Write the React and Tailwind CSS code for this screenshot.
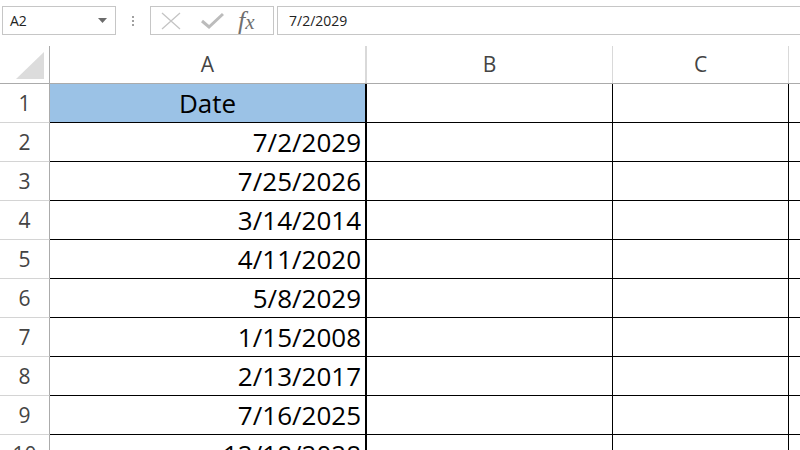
import React from "react";

const dates = [
  "7/2/2029",
  "7/25/2026",
  "3/14/2014",
  "4/11/2020",
  "5/8/2029",
  "1/15/2008",
  "2/13/2017",
  "7/16/2025",
  "12/18/2028",
];

const font = { fontFamily: '"Open Sans", "Liberation Sans", sans-serif' };

function FormulaBar() {
  return (
    <div className="flex h-[46px] items-start pt-[6px] bg-white">
      <div className="ml-[2px] flex h-[29px] w-[114px] items-center border border-[#c6c6c6] pl-[7px] pr-[8px]">
        <span className="flex-1 text-[14px] text-[#222]">A2</span>
        <svg width="9" height="5" viewBox="0 0 9 5">
          <path d="M0 0 H9 L4.5 5 Z" fill="#6b6b6b" />
        </svg>
      </div>
      <div className="flex h-[29px] w-[34px] flex-col items-center justify-center gap-[2px]">
        <span className="h-[2px] w-[2px] bg-[#a0a0a0]" />
        <span className="h-[2px] w-[2px] bg-[#a0a0a0]" />
        <span className="h-[2px] w-[2px] bg-[#a0a0a0]" />
      </div>
      <div className="flex h-[29px] w-[124px] items-center border border-[#c6c6c6]">
        <svg className="ml-[10px]" width="20" height="18" viewBox="0 0 20 18">
          <path d="M1 1 L19 17 M19 1 L1 17" stroke="#c4c4c4" strokeWidth="1.3" fill="none" />
        </svg>
        <svg className="ml-[20px]" width="23" height="17" viewBox="0 0 23 17">
          <path d="M1 9 L8 15 L22 2" stroke="#bcbcbc" strokeWidth="3" fill="none" />
        </svg>
        <span
          className="ml-[14px] text-[26px] italic leading-none text-[#707070]"
          style={{ fontFamily: '"Liberation Serif", serif' }}
        >
          f<span className="text-[21px]">x</span>
        </span>
      </div>
      <div className="ml-[3px] flex h-[29px] flex-1 items-center border-y border-l border-[#c6c6c6] pl-[11px] text-[14px] text-[#222]">
        7/2/2029
      </div>
    </div>
  );
}

function HeaderRow() {
  return (
    <div className="flex h-[38px] border-b border-[#ababab] text-[21px] text-[#444]">
      <div className="relative w-[50px] border-r border-[#ababab]">
        <svg className="absolute left-[16px] top-[6px]" width="29" height="28" viewBox="0 0 29 28">
          <path d="M28 0 V27 H0 Z" fill="#dcdcdc" />
        </svg>
      </div>
      <div className="flex w-[317px] items-center justify-center border-r-2 border-[#d9d9d9]">A</div>
      <div className="flex w-[246px] items-center justify-center border-r border-[#d9d9d9]">B</div>
      <div className="flex w-[176px] items-center justify-center border-r border-[#d9d9d9]">C</div>
      <div className="flex-1" />
    </div>
  );
}

function Row({ num, value, head }) {
  return (
    <div className="flex h-[39px]">
      <div className="flex w-[50px] items-center justify-center border-r border-b border-r-[#ababab] border-b-[#d4d4d4] pt-[2px] text-[21px] text-[#444]">
        {num}
      </div>
      <div
        className={
          head
            ? "flex w-[317px] items-center justify-center border-r-2 border-b border-black bg-[#9bc2e6] text-[26px] text-black"
            : "flex w-[317px] items-center justify-end border-r-2 border-b border-black pr-[4px] text-[26px] text-black"
        }
      >
        {value}
      </div>
      <div className="w-[246px] border-r border-b border-black" />
      <div className="w-[176px] border-r border-b border-black" />
      <div className="flex-1 border-b border-black" />
    </div>
  );
}

export default function App() {
  return (
    <div className="h-[450px] w-[800px] overflow-hidden bg-white" style={font}>
      <FormulaBar />
      <HeaderRow />
      <Row num={1} value="Date" head />
      {dates.map((d, i) => (
        <Row key={i} num={i + 2} value={d} />
      ))}
    </div>
  );
}
